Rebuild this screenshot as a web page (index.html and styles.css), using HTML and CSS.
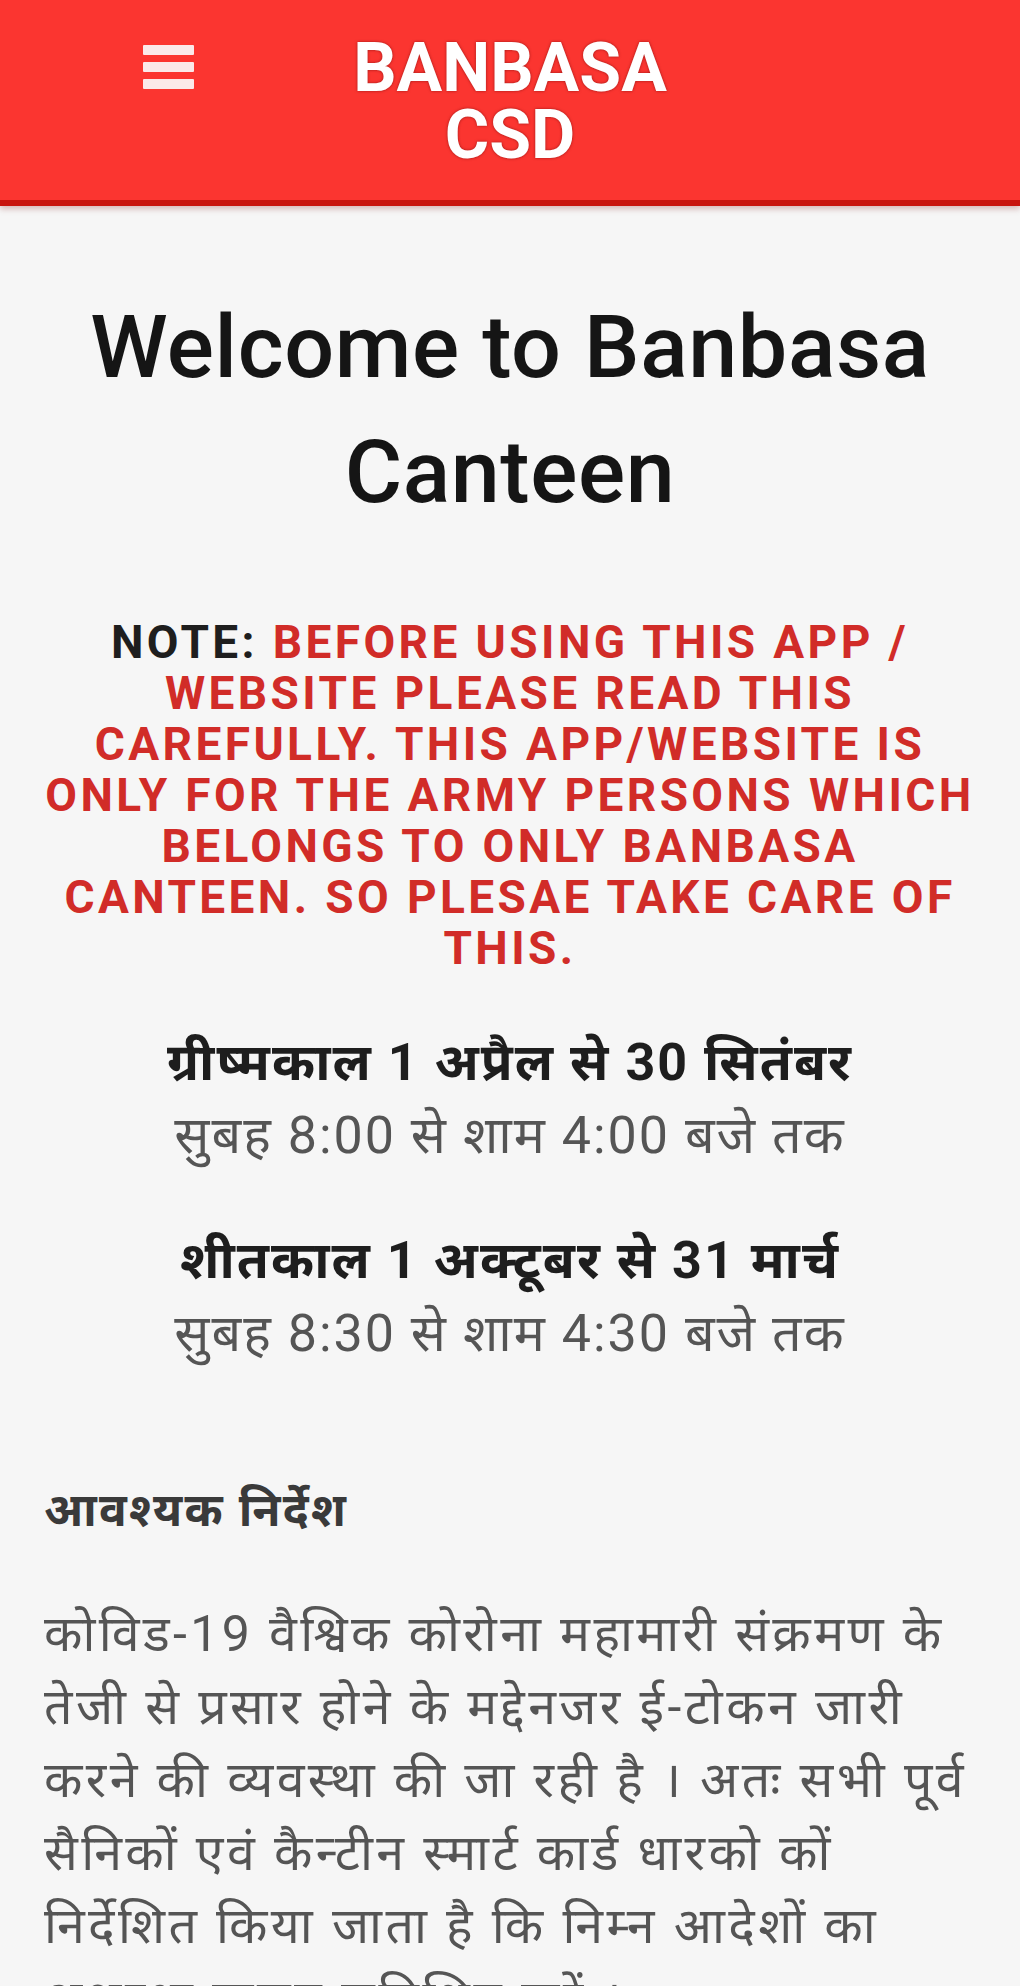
FILE: index.html
```html
<!DOCTYPE html>
<html lang="hi">
<head>
<meta charset="utf-8">
<title>BANBASA CSD</title>
<link rel="stylesheet" href="styles.css">
</head>
<body>
<header class="appbar">
  <span class="menu" aria-label="menu">
    <span class="bar"></span><span class="bar"></span><span class="bar"></span>
  </span>
  <div class="brand">BANBASA CSD</div>
</header>
<main class="content">
  <h1 class="welcome">Welcome to Banbasa Canteen</h1>
  <p class="note"><span class="note-label">NOTE:</span> BEFORE USING THIS APP /<br>WEBSITE PLEASE READ THIS<br>CAREFULLY. THIS APP/WEBSITE IS<br>ONLY FOR THE ARMY PERSONS WHICH<br>BELONGS TO ONLY BANBASA<br>CANTEEN. SO PLESAE TAKE CARE OF<br>THIS.</p>
  <div class="season">
    <p class="season-title">ग्रीष्मकाल 1 अप्रैल से 30 सितंबर</p>
    <p class="season-time">सुबह 8:00 से शाम 4:00 बजे तक</p>
  </div>
  <div class="season">
    <p class="season-title">शीतकाल 1 अक्टूबर से 31 मार्च</p>
    <p class="season-time">सुबह 8:30 से शाम 4:30 बजे तक</p>
  </div>
  <h2 class="instr-title">आवश्यक निर्देश</h2>
  <p class="instr-text">कोविड-19 वैश्विक कोरोना महामारी संक्रमण के<br>तेजी से प्रसार होने के मद्देनजर ई-टोकन जारी<br>करने की व्यवस्था की जा रही है । अतः सभी पूर्व<br>सैनिकों एवं कैन्टीन स्मार्ट कार्ड धारको कों<br>निर्देशित किया जाता है कि निम्न आदेशों का<br>अक्षरशः पालन सुनिश्चित करें ।</p>
</main>
</body>
</html>
```

FILE: styles.css
```css
html, body {
  margin: 0;
  padding: 0;
}
body {
  background: #f6f6f6;
  font-family: Roboto, "Noto Sans Devanagari", "Lohit Devanagari", "Noto Sans", sans-serif;
  color: #1a1a1a;
  width: 1020px;
  overflow: hidden;
}
.appbar {
  position: relative;
  height: 200px;
  background: #fb3530;
  border-bottom: 6px solid #c8140e;
  box-shadow: 0 3px 6px rgba(120, 0, 0, 0.25);
  display: flex;
  align-items: center;
  justify-content: center;
}
.menu {
  position: absolute;
  left: 143px;
  top: 45px;
  width: 51px;
  display: flex;
  flex-direction: column;
  gap: 7px;
}
.bar {
  display: block;
  height: 10px;
  background: #fbe9e9;
  border-radius: 1px;
}
.brand {
  max-width: 380px;
  text-align: center;
  color: #ffffff;
  font-weight: 700;
  font-size: 68px;
  line-height: 67px;
  text-shadow: 0 0 3px rgba(90, 0, 0, 0.6);
  margin-top: 3px;
}
.content {
  padding: 0 44px;
}
.welcome {
  margin: 78px 0 0;
  text-align: center;
  font-weight: 500;
  font-size: 88px;
  line-height: 125px;
  letter-spacing: 0.6px;
  color: #151515;
}
.note {
  margin: 83px -30px 0;
  text-align: center;
  white-space: nowrap;
  font-weight: 700;
  font-size: 46px;
  line-height: 51px;
  letter-spacing: 3.4px;
  color: #d12c28;
}
.note-label {
  color: #1e1e1e;
}
.season {
  margin-top: 52px;
  text-align: center;
}
.season p {
  margin: 0;
  font-size: 52px;
  line-height: 73px;
  letter-spacing: 2px;
}
.season-title {
  font-weight: 700;
  color: #1e1e1e;
}
.season-time {
  color: #555555;
}
.instr-title {
  margin: 104px 0 0;
  font-size: 46px;
  font-weight: 700;
  line-height: 72px;
  letter-spacing: 2.3px;
  color: #3a3a3a;
}
.instr-text {
  margin: 52px -30px 0 0;
  white-space: nowrap;
  font-size: 50px;
  line-height: 73px;
  letter-spacing: 3.4px;
  color: #555555;
}
```
